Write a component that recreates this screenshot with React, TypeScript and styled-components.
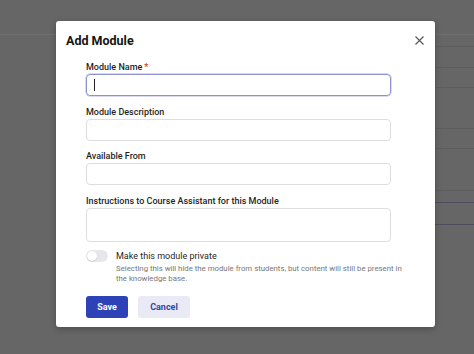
import React from "react";
import styled, { createGlobalStyle } from "styled-components";

const Global = createGlobalStyle`
  html, body { margin: 0; padding: 0; }
  body {
    width: 474px;
    height: 354px;
    overflow: hidden;
    background: #666666;
    font-family: Roboto, Inter, "Liberation Sans", sans-serif;
    -webkit-font-smoothing: antialiased;
  }
  * { box-sizing: border-box; }
`;

/* dimmed page behind the dialog */
const Page = styled.div`
  position: relative;
  width: 474px;
  height: 354px;
  background: #666666;
  display: flex;
  flex-direction: column;
`;

const PageHeader = styled.div`
  height: 35px;
  border-bottom: 1px solid #6e6e6e;
`;

const PageRows = styled.div`
  display: flex;
  flex-direction: column;
  padding-left: 60px;
`;

const PageRow = styled.div<{ $h: number; $accent?: boolean }>`
  height: ${(p) => p.$h}px;
  border-bottom: 1px solid ${(p) => (p.$accent ? "#4d4d5e" : "#5d5d5d")};
`;

const Dialog = styled.div`
  position: absolute;
  left: 56px;
  top: 21px;
  width: 379px;
  background: #ffffff;
  border-radius: 3px;
  box-shadow: 0 2px 6px rgba(0, 0, 0, 0.25);
  display: flex;
  flex-direction: column;
  padding: 10px 10px 9px;
  & > * { flex-shrink: 0; }
`;

const DialogHeader = styled.div`
  display: flex;
  align-items: center;
  justify-content: space-between;
  height: 19px;
`;

const Title = styled.h2`
  margin: 0;
  font-size: 12.5px;
  font-weight: 700;
  color: #141414;
`;

const CloseButton = styled.button`
  border: none;
  background: none;
  padding: 0;
  width: 12px;
  height: 12px;
  display: flex;
  align-items: center;
  justify-content: center;
  color: #555;
`;

const Form = styled.form`
  display: flex;
  flex-direction: column;
  margin: 11px 0 0 20px;
  width: 305px;
`;

const Field = styled.div`
  display: flex;
  flex-direction: column;
  margin-bottom: 9.5px;
`;

const Label = styled.label`
  font-size: 9px;
  font-weight: 500;
  color: #1f1f1f;
  line-height: 12px;
  height: 12px;
  margin-bottom: 1px;
`;

const Required = styled.span`
  color: #d93025;
  margin-left: 2px;
`;

const Input = styled.div<{ $focused?: boolean; $tall?: boolean }>`
  height: ${(p) => (p.$tall ? 34 : 22)}px;
  border: 1px solid ${(p) => (p.$focused ? "#8d91d2" : "#dedede")};
  border-radius: 4px;
  box-shadow: ${(p) => (p.$focused ? "0 0 0 0.5px #b5b8e6" : "none")};
  display: flex;
  align-items: center;
  padding-left: 7px;
`;

const Caret = styled.span`
  width: 1px;
  height: 12px;
  background: #222;
`;

const ToggleRow = styled.div`
  display: flex;
  gap: 8px;
  align-items: flex-start;
  margin-top: -1px;
  width: 320px;
`;

const Toggle = styled.span`
  flex: none;
  width: 22px;
  height: 12px;
  border-radius: 6px;
  background: #e6e7ea;
  display: flex;
  align-items: center;
  padding-left: 1px;
`;

const Knob = styled.span`
  width: 10px;
  height: 10px;
  border-radius: 50%;
  background: #ffffff;
  box-shadow: 0 0.5px 1px rgba(0, 0, 0, 0.2);
`;

const ToggleText = styled.div`
  display: flex;
  flex-direction: column;
`;

const ToggleLabel = styled.span`
  font-size: 9px;
  color: #1f1f1f;
  line-height: 12px;
`;

const Helper = styled.p`
  margin: 2px 0 0;
  font-size: 7.8px;
  line-height: 9.5px;
  color: #777;
`;

const Actions = styled.div`
  display: flex;
  gap: 10px;
  margin-top: 13px;
`;

const Button = styled.button<{ $primary?: boolean }>`
  height: 22px;
  width: ${(p) => (p.$primary ? 42 : 52)}px;
  padding: 0;
  border: none;
  border-radius: 3px;
  font-family: inherit;
  font-size: 9px;
  font-weight: 700;
  background: ${(p) => (p.$primary ? "#2c42b6" : "#e9eaf6")};
  color: ${(p) => (p.$primary ? "#ffffff" : "#3344a8")};
`;

export default function App() {
  const rows: Array<[number, boolean?]> = [
    [12],
    [21],
    [20],
    [41],
    [20],
    [42],
    [12, true],
    [22, true],
  ];
  return (
    <>
      <Global />
      <Page>
        <PageHeader />
        <PageRows>
          {rows.map(([h, a], i) => (
            <PageRow key={i} $h={h} $accent={a} />
          ))}
        </PageRows>
        <Dialog>
          <DialogHeader>
            <Title>Add Module</Title>
            <CloseButton aria-label="Close">
              <svg width="9" height="9" viewBox="0 0 9 9">
                <path d="M0.5 0.5 L8.5 8.5 M8.5 0.5 L0.5 8.5" stroke="#555" strokeWidth="1.1" />
              </svg>
            </CloseButton>
          </DialogHeader>
          <Form>
            <Field>
              <Label>
                Module Name<Required>*</Required>
              </Label>
              <Input $focused>
                <Caret />
              </Input>
            </Field>
            <Field>
              <Label>Module Description</Label>
              <Input />
            </Field>
            <Field>
              <Label>Available From</Label>
              <Input />
            </Field>
            <Field>
              <Label>Instructions to Course Assistant for this Module</Label>
              <Input $tall />
            </Field>
            <ToggleRow>
              <Toggle>
                <Knob />
              </Toggle>
              <ToggleText>
                <ToggleLabel>Make this module private</ToggleLabel>
                <Helper>
                  Selecting this will hide the module from students, but content will still be present in the knowledge base.
                </Helper>
              </ToggleText>
            </ToggleRow>
            <Actions>
              <Button $primary type="button">Save</Button>
              <Button type="button">Cancel</Button>
            </Actions>
          </Form>
        </Dialog>
      </Page>
    </>
  );
}
